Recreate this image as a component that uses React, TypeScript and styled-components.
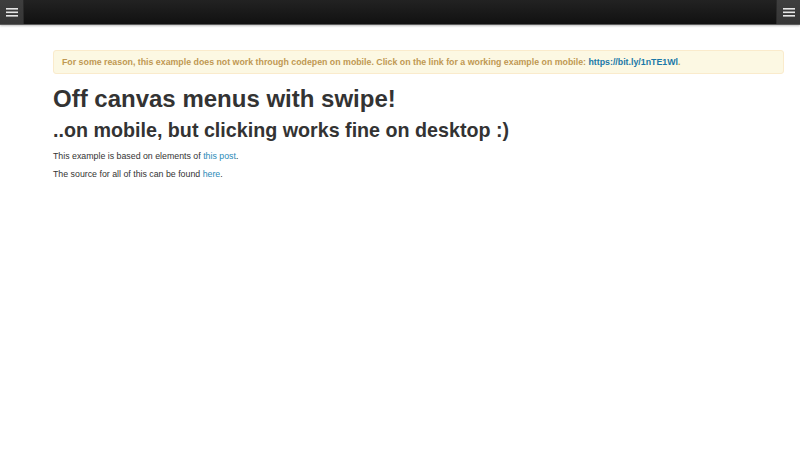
import { createGlobalStyle, styled } from "styled-components";

const GlobalStyle = createGlobalStyle`
    html, body {
        margin: 0;
        padding: 0;
        background: #fff;
        font-family: "Liberation Sans", Arial, sans-serif;
        color: #333;
    }
`;

const TopBar = styled.header`
    display: flex;
    justify-content: space-between;
    height: 24px;
    background: linear-gradient(to bottom, #222 0%, #111 100%);
    border-bottom: 1px solid #5a5a5a;
    box-shadow: 0 1px 2px rgba(0, 0, 0, 0.25);
`;

const MenuBtn = styled.button<{ $side: "left" | "right" }>`
    display: flex;
    align-items: center;
    justify-content: center;
    width: 24px;
    height: 24px;
    padding: 0;
    border: none;
    ${(p) => p.$side === "left" ? "border-right: 1px solid #2a2a2a;" : "border-left: 1px solid #2a2a2a;"}
    background: linear-gradient(to bottom, #3e3e3e 0%, #363636 100%);
    cursor: pointer;
`;

const Content = styled.main`
    padding: 25px 16px 0 53px;
`;

const Alert = styled.div`
    padding: 5px 8px;
    background: #fcf8e3;
    border: 1px solid #faebcc;
    border-radius: 3px;
    color: #c09853;
    font-size: 8.8px;
    font-weight: bold;
    line-height: 12px;
`;

const AlertLink = styled.a`
    color: #1a78a8;
    font-weight: bold;
    text-decoration: none;
`;

const Title = styled.h1`
    margin: 11px 0 0;
    font-size: 24px;
    line-height: 28px;
    font-weight: bold;
`;

const Subtitle = styled.h2`
    margin: 5px 0 9px;
    font-size: 19.7px;
    line-height: 24px;
    font-weight: bold;
`;

const Para = styled.p`
    margin: 0 0 8px;
    font-size: 8.8px;
    line-height: 10px;
`;

const Link = styled.a`
    color: #2a8ab8;
    text-decoration: none;
`;

function Hamburger() {
    return (
        <svg width="12" height="9" viewBox="0 0 12 9">
            <rect x="0" y="0" width="12" height="1.6" fill="#e6e6e6" />
            <rect x="0" y="3.5" width="12" height="1.6" fill="#e6e6e6" />
            <rect x="0" y="7" width="12" height="1.6" fill="#e6e6e6" />
        </svg>
    );
}

export default function App() {
    return (
        <>
            <GlobalStyle />
            <TopBar>
                <MenuBtn $side="left"><Hamburger /></MenuBtn>
                <MenuBtn $side="right"><Hamburger /></MenuBtn>
            </TopBar>
            <Content>
                <Alert>
                    For some reason, this example does not work through codepen on mobile. Click on the link for a working example on mobile:{" "}
                    <AlertLink href="#">https://bit.ly/1nTE1Wl</AlertLink>.
                </Alert>
                <Title>Off canvas menus with swipe!</Title>
                <Subtitle>..on mobile, but clicking works fine on desktop :)</Subtitle>
                <Para>This example is based on elements of <Link href="#">this post</Link>.</Para>
                <Para>The source for all of this can be found <Link href="#">here</Link>.</Para>
            </Content>
        </>
    );
}
